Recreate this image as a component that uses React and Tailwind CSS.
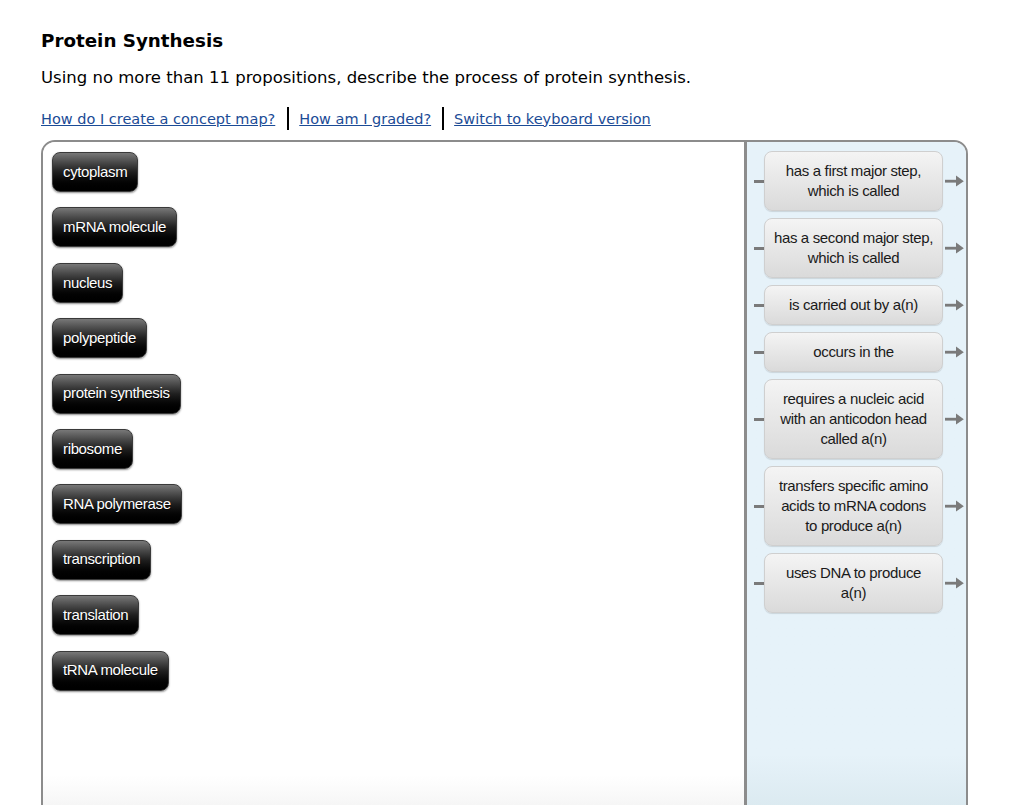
import React from 'react'

const concepts = [
  'cytoplasm',
  'mRNA molecule',
  'nucleus',
  'polypeptide',
  'protein synthesis',
  'ribosome',
  'RNA polymerase',
  'transcription',
  'translation',
  'tRNA molecule',
]

const links = [
  ['has a first major step,', 'which is called'],
  ['has a second major step,', 'which is called'],
  ['is carried out by a(n)'],
  ['occurs in the'],
  ['requires a nucleic acid', 'with an anticodon head', 'called a(n)'],
  ['transfers specific amino', 'acids to mRNA codons', 'to produce a(n)'],
  ['uses DNA to produce', 'a(n)'],
]

const helv = { fontFamily: '"Liberation Sans", Arial, Helvetica, sans-serif' }

function Arrow() {
  return (
    <svg width="19" height="12" viewBox="0 0 19 12" className="shrink-0">
      <rect x="0" y="4.8" width="12" height="2.8" fill="#7a7a7a" />
      <path d="M11 0.6 L18.8 6.2 L11 11.6 Z" fill="#7a7a7a" />
    </svg>
  )
}

function Concept({ label }) {
  return (
    <div
      className="self-start h-[40px] px-[10px] flex items-center rounded-[8px] border border-[#3a3a3a] bg-gradient-to-b from-[#787878] via-[#1f1f1f] to-black text-white text-[15px] tracking-[-0.35px] shadow-[0_1px_2px_rgba(0,0,0,0.45)]"
      style={{ ...helv, textShadow: '0 1px 1px rgba(0,0,0,0.8)' }}
    >
      {label}
    </div>
  )
}

function LinkPhrase({ lines }) {
  return (
    <div className="flex items-center">
      <div className="w-[10px] h-[3px] bg-[#7a7a7a]" />
      <div
        className="w-[179px] py-[9px] rounded-[8px] border border-[#cfcfcf] bg-gradient-to-b from-[#f4f4f4] to-[#dadada] text-center text-[#1a1a1a] text-[15px] leading-[20px] tracking-[-0.35px] shadow-[0_1px_1px_rgba(0,0,0,0.12)]"
        style={helv}
      >
        {lines.map((l, i) => (
          <div key={i}>{l}</div>
        ))}
      </div>
      <div className="ml-[2px]">
        <Arrow />
      </div>
    </div>
  )
}

export default function App() {
  return (
    <div className="bg-white min-h-screen pl-[41px] pt-[29px]" style={{ fontFamily: '"DejaVu Sans", Verdana, sans-serif' }}>
      <h1 className="text-[18.3px] font-bold text-black leading-[24px]">Protein Synthesis</h1>
      <p className="mt-[15px] text-[16.5px] text-black leading-[20px]">
        Using no more than 11 propositions, describe the process of protein synthesis.
      </p>
      <div className="mt-[19px] flex items-center text-[14.5px] leading-[20px] text-[#1b4b96]">
        <a className="underline">How do I create a concept map?</a>
        <span className="ml-[12px] mr-[10px] w-[2px] h-[23px] bg-black" />
        <a className="underline">How am I graded?</a>
        <span className="ml-[11px] mr-[10px] w-[2px] h-[23px] bg-black" />
        <a className="underline">Switch to keyboard version</a>
      </div>

      <div className="mt-[10px] w-[927px] h-[700px] flex border-2 border-[#8c8c8c] rounded-t-[14px] overflow-hidden shadow-[inset_0_1px_2px_rgba(0,0,0,0.15)]">
        <div className="w-[704px] bg-gradient-to-b from-white from-[91%] to-[#ececec] border-r-[3px] border-[#8c8c8c] pl-[9px] pt-[10px] flex flex-col gap-[15.4px]">
          {concepts.map(c => (
            <Concept key={c} label={c} />
          ))}
        </div>
        <div className="flex-1 bg-gradient-to-b from-[#e6f2f9] from-[88%] to-[#d5e5eb] pl-[7px] pt-[9px] flex flex-col gap-[7px]">
          {links.map((l, i) => (
            <LinkPhrase key={i} lines={l} />
          ))}
        </div>
      </div>
    </div>
  )
}
